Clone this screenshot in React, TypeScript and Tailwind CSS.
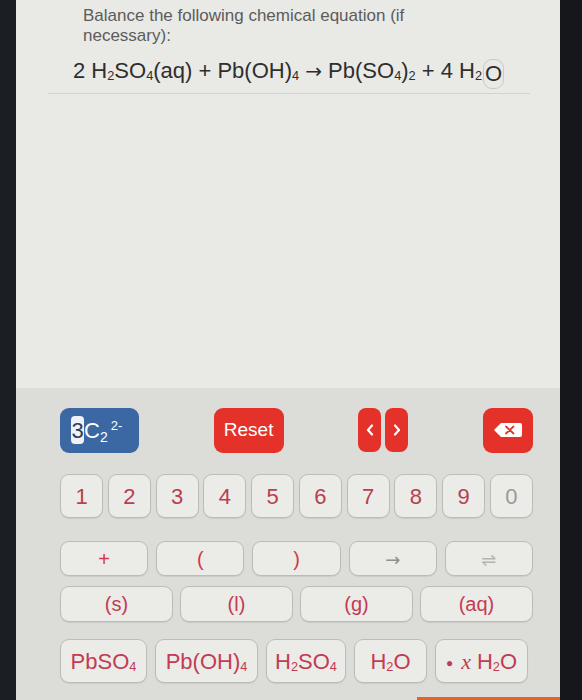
import { ReactNode } from 'react';

const FONT = { fontFamily: '"Liberation Sans", Arial, sans-serif' };
const ARROW = { fontFamily: '"DejaVu Sans", sans-serif' };

function Sub({ children }: { children: ReactNode }) {
  return <span className="text-[0.58em] align-[-0.18em]">{children}</span>;
}

function Key({ className, children }: { className: string; children: ReactNode }) {
  return (
    <div
      className={`flex items-center justify-center rounded-[9px] border-[1.5px] border-[#bcbcb9] bg-[#ebebe8] shadow-[0_1px_1px_rgba(0,0,0,0.08)] ${className}`}
    >
      <span>{children}</span>
    </div>
  );
}

function BackspaceIcon() {
  return (
    <svg width="28" height="14" viewBox="0 0 28 14">
      <path d="M7 0 H26 a2 2 0 0 1 2 2 V12 a2 2 0 0 1 -2 2 H7 L0 7 Z" fill="#ffffff" />
      <path d="M12 3.5 L19.5 10.5 M19.5 3.5 L12 10.5" stroke="#e4322a" strokeWidth="1.8" strokeLinecap="round" />
    </svg>
  );
}

function Chevron({ dir }: { dir: 'left' | 'right' }) {
  return (
    <svg width="8" height="12" viewBox="0 0 8 12">
      <path
        d={dir === 'left' ? 'M6 1.5 L2 6 L6 10.5' : 'M2 1.5 L6 6 L2 10.5'}
        fill="none"
        stroke="#ffffff"
        strokeWidth="2.2"
        strokeLinecap="round"
        strokeLinejoin="round"
      />
    </svg>
  );
}

export default function App() {
  const digits = ['1', '2', '3', '4', '5', '6', '7', '8', '9', '0'];

  return (
    <div className="flex h-[700px] w-[582px] overflow-hidden" style={FONT}>
      {/* bezel */}
      <div className="w-[16px] bg-[#1b1e23]" />

      <div className="flex flex-1 flex-col">
        {/* question */}
        <div className="h-[388px] bg-[#e9e9e6]">
          <p className="pl-[67px] pt-[6px] text-[17px] leading-[20px] text-[#5c5c5c]">
            Balance the following chemical equation (if
            <br />
            necessary):
          </p>
          <div className="mt-[11px] flex items-center pl-[57px] text-[22px] leading-[28px] text-[#2e2e2e]">
            <span>
              2 H<Sub>2</Sub>SO<Sub>4</Sub>(aq) + Pb(OH)<Sub>4</Sub>{' '}
              <span className="text-[20px]" style={ARROW}>→</span> Pb(SO<Sub>4</Sub>)<Sub>2</Sub> + 4 H<Sub>2</Sub>
            </span>
            <span className="ml-[1px] rounded-[9px] border border-[#c9c9c6] px-[1px]">O</span>
          </div>
          <div className="ml-[32px] mt-[3px] h-px w-[482px] bg-[#d3d3d0]" />
        </div>

        {/* keyboard */}
        <div className="flex flex-1 flex-col bg-[#dcdcd9]">
          <div className="flex flex-col pl-[44px] pr-[27px]">
            <div className="mt-[19px] flex h-[46px] items-center justify-between">
              <div className="flex h-[45px] w-[79px] items-center rounded-[9px] bg-[#3b67a2] pl-[11px] text-[22px] text-white">
                <span className="flex h-[28px] w-[13px] items-center justify-center rounded-[4px] bg-[#eef1f5] text-[#2c3e57]">
                  3
                </span>
                <span>C</span>
                <span className="mb-[5px] self-end text-[14px]">2</span>
                <span className="ml-[3px] mt-[8px] self-start text-[13px]">2-</span>
              </div>
              <div className="flex h-[45px] w-[70px] items-center justify-center rounded-[9px] bg-[#e4322a] text-[19px] text-white">
                Reset
              </div>
              <div className="flex gap-[4px]">
                <div className="flex h-[44px] w-[23px] items-center justify-center rounded-[8px] bg-[#e4322a]">
                  <Chevron dir="left" />
                </div>
                <div className="flex h-[44px] w-[23px] items-center justify-center rounded-[8px] bg-[#e4322a]">
                  <Chevron dir="right" />
                </div>
              </div>
              <div className="flex h-[45px] w-[50px] items-center justify-center rounded-[9px] bg-[#e4322a]">
                <BackspaceIcon />
              </div>
            </div>

            <div className="mt-[21px] flex justify-between">
              {digits.map((d) => (
                <Key key={d} className={`h-[44px] w-[43px] text-[22px] ${d === '0' ? 'text-[#9a9a9a]' : 'text-[#b8404f]'}`}>
                  {d}
                </Key>
              ))}
            </div>

            <div className="mt-[23px] flex gap-[8px] text-[20px]">
              <Key className="h-[35px] flex-1 text-[#d23a4d]">+</Key>
              <Key className="h-[35px] flex-1 text-[#d23a4d]">(</Key>
              <Key className="h-[35px] flex-1 text-[#d23a4d]">)</Key>
              <Key className="h-[35px] flex-1 text-[#8f8f8f]">
                <span className="text-[18px]" style={ARROW}>→</span>
              </Key>
              <Key className="h-[35px] flex-1 text-[#b5b5b5]">
                <span className="text-[18px]" style={ARROW}>⇌</span>
              </Key>
            </div>

            <div className="mt-[10px] flex gap-[7px] text-[20px] text-[#c43c52]">
              <Key className="h-[36px] flex-1">(s)</Key>
              <Key className="h-[36px] flex-1">(l)</Key>
              <Key className="h-[36px] flex-1">(g)</Key>
              <Key className="h-[36px] flex-1">(aq)</Key>
            </div>

            <div className="mt-[17px] flex gap-[8px] text-[22px] text-[#c43a52]">
              <Key className="h-[44px] w-[87px]">
                PbSO<Sub>4</Sub>
              </Key>
              <Key className="h-[44px] w-[103px]">
                Pb(OH)<Sub>4</Sub>
              </Key>
              <Key className="h-[44px] w-[80px]">
                H<Sub>2</Sub>SO<Sub>4</Sub>
              </Key>
              <Key className="h-[44px] w-[73px]">
                H<Sub>2</Sub>O
              </Key>
              <Key className="h-[44px] w-[93px]">
                <span className="mr-[8px] align-[0.15em] text-[12px]">●</span>
                <span className="mr-[6px] italic" style={{ fontFamily: '"Liberation Serif", serif' }}>
                  x
                </span>
                H<Sub>2</Sub>O
              </Key>
            </div>
          </div>
          <div className="ml-[401px] mt-auto h-[3px] bg-[#e0652c]" />
        </div>
      </div>

      {/* bezel */}
      <div className="w-[22px] bg-[#15171b]" />
    </div>
  );
}
